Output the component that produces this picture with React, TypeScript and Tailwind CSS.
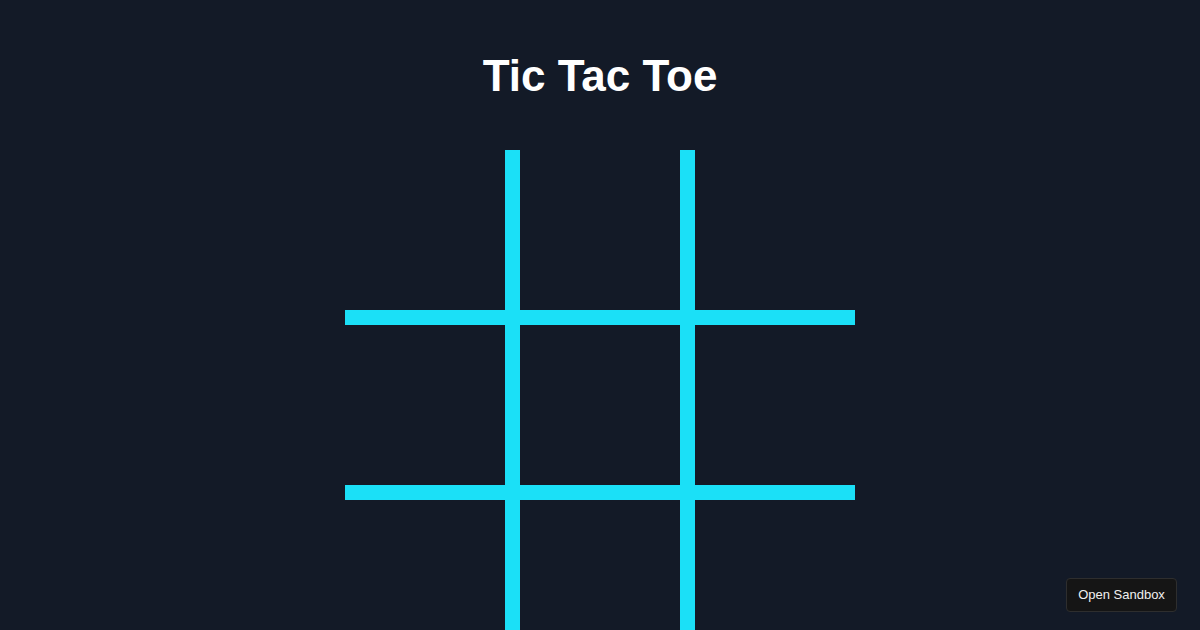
import React from 'react';

const cells = Array.from({ length: 9 }, (_, i) => i);

export default function App() {
  return (
    <div className="relative h-[630px] w-full overflow-hidden bg-[#131a27] font-['Liberation_Sans',Arial,sans-serif]">
      <div className="flex flex-col items-center pt-[54px]">
        <h1 className="text-[44px] font-bold leading-none text-white">Tic Tac Toe</h1>
        <div className="mt-[52px] grid grid-cols-3 gap-[15px] bg-[#1be0f7]">
          {cells.map((i) => (
            <button key={i} className="h-[160px] w-[160px] bg-[#131a27]" />
          ))}
        </div>
      </div>

      <button className="absolute bottom-[18px] right-[23px] flex h-[34px] w-[111px] items-center justify-center rounded-[4px] border border-[#2e2e2e] bg-[#151515] text-[13px] text-[#f0f0f0]">
        Open Sandbox
      </button>
    </div>
  );
}
